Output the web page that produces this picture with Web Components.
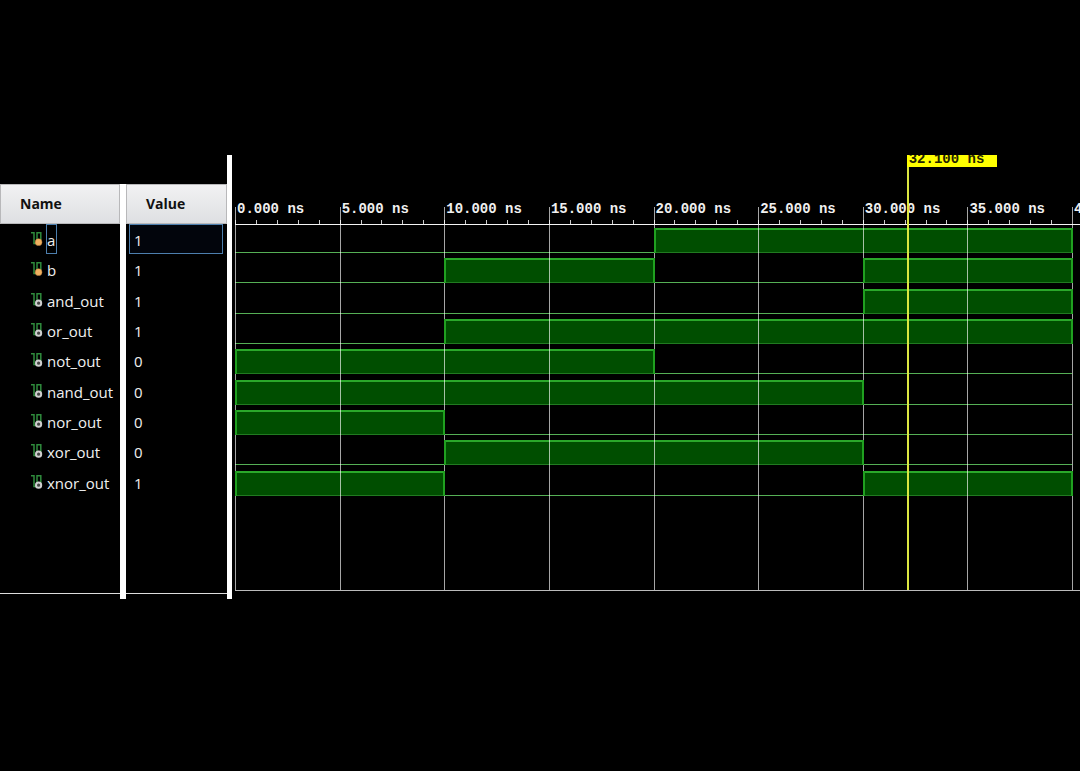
<!DOCTYPE html>
<html lang="en">
<head>
<meta charset="utf-8">
<title>Waveform</title>
<style>
body{
    margin: 0;
    min-height: 100vh;
    background-color: #000;
    color: #f0f0f0;
    font-family: "Open Sans", "Noto Sans", sans-serif;
}
</style>
</head>
<body>
<wave-viewer>
    <signal-table slot="signals"></signal-table>
    <wave-panel slot="waves"></wave-panel>
</wave-viewer>

<script>
const signals = [
    { name: 'a', value: '1', kind: 'in', wave: '0011' },
    { name: 'b', value: '1', kind: 'in', wave: '0101' },
    { name: 'and_out', value: '1', kind: 'out', wave: '0001' },
    { name: 'or_out', value: '1', kind: 'out', wave: '0111' },
    { name: 'not_out', value: '0', kind: 'out', wave: '1100' },
    { name: 'nand_out', value: '0', kind: 'out', wave: '1110' },
    { name: 'nor_out', value: '0', kind: 'out', wave: '1000' },
    { name: 'xor_out', value: '0', kind: 'out', wave: '0110' },
    { name: 'xnor_out', value: '1', kind: 'out', wave: '1001' }
];

class WaveViewer extends HTMLElement{
    constructor(){
        super();
        this.attachShadow({mode:'open'});
        this.shadowRoot.innerHTML = `
<style>
:host{
    display: block;
    padding-top: 155px;
    --rows-height: 273px;
}
.viewer{
    display: flex;
    align-items: flex-start;
}
.signals{
    flex: none;
    padding-top: 29px;
    border-right: 5px solid #fff;
}
.waves{
    flex: 1;
    min-width: 0;
    padding-left: 3px;
}
</style>
<main class="viewer">
    <section class="signals"><slot name="signals"></slot></section>
    <section class="waves"><slot name="waves"></slot></section>
</main>`;
    }
}

class SignalIcon extends HTMLElement{
    constructor(){
        super();
        this.attachShadow({mode:'open'});
    }

    connectedCallback(){
        const input = this.getAttribute('kind') === 'in';
        this.shadowRoot.innerHTML = `
<style>
:host{
    display: block;
    width: 12px;
    height: 14px;
}
svg{
    display: block;
}
</style>
<svg width="12" height="14" viewBox="0 0 12 14">
    <path d="M0 .8H3V11.5H6V.8H9.8V8" fill="none" stroke="#2f8a3c" stroke-width="1.5"/>
    <circle cx="7.6" cy="10.2" r="${input ? 3.4 : 2.6}" fill="${input ? '#f0b060' : '#444'}" stroke="${input ? '#c08440' : '#cfcfcf'}" stroke-width="${input ? 0.5 : 2}"/>
</svg>`;
    }
}

class SignalTable extends HTMLElement{
    constructor(){
        super();
        this.attachShadow({mode:'open'});
        const rows = signals.map((s, i) => `
<tr class="${i === 0 ? 'selected' : ''}">
    <td class="name"><signal-icon kind="${s.kind}"></signal-icon><span>${s.name}</span></td>
    <td class="value"><span>${s.value}</span></td>
</tr>`).join('');
        this.shadowRoot.innerHTML = `
<style>
:host{
    display: block;
    font-size: 15px;
    line-height: 20px;
}
table, thead, tfoot{
    display: block;
}
tr{
    display: flex;
}
th, td{
    box-sizing: border-box;
    display: flex;
    align-items: center;
    padding: 0;
}
th:first-child, td:first-child{
    width: 126px;
    border-right: 6px solid #fff;
}
th:last-child, td:last-child{
    width: 101px;
}
th{
    height: 40px;
    background: linear-gradient(#f2f2f3, #dedfe2);
    box-shadow: inset 0 0 0 1px #b8b8ba;
    color: #111;
    font-size: 14px;
    font-weight: bold;
    padding: 0 20px;
}
tbody{
    display: grid;
    grid-auto-rows: 1fr;
    height: var(--rows-height);
}
.name{
    padding-left: 31px;
    gap: 3px;
}
.name span, .value span{
    box-sizing: border-box;
    border: 1px solid transparent;
    height: 100%;
    padding: 5px 1px 0 0;
}
.value{
    padding: 0 4px 0 3px;
}
.value span{
    flex: 1;
    padding-left: 4px;
}
.selected span{
    border-color: #4d7fae;
}
.selected .value span{
    background-color: #02050c;
}
.filler td{
    height: 97px;
    box-shadow: inset 0 -1px #ddd;
}
.edge td{
    height: 5px;
}
</style>
<table>
    <thead><tr><th>Name</th><th>Value</th></tr></thead>
    <tbody>${rows}</tbody>
    <tfoot>
        <tr class="filler"><td></td><td></td></tr>
        <tr class="edge"><td></td><td></td></tr>
    </tfoot>
</table>`;
    }
}

class SignalWave extends HTMLElement{
    constructor(){
        super();
        this.attachShadow({mode:'open'});
    }

    connectedCallback(){
        //Equal neighbours are merged so that each run is one segment
        const runs = this.getAttribute('wave').match(/0+|1+/g);
        this.shadowRoot.innerHTML = `
<style>
:host{
    display: grid;
    grid-template-columns: repeat(4, 1fr);
    grid-template-rows: 25px;
    padding-top: 3px;
}
div{
    box-sizing: border-box;
    position: relative;
    border-bottom: 1px solid #55b055;
}
.high{
    background-color: #004e00;
    border-top: 2px solid #2aa82a;
    border-bottom-color: #217a21;
}
.high::after{
    content: "";
    position: absolute;
    z-index: 2;
    inset: -2px -1px -1px 0;
    border: solid #20a020;
    border-width: 0 2px;
}
</style>
${runs.map(r => `<div class="${r[0] === '1' ? 'high' : 'low'}" style="grid-column: span ${r.length}"></div>`).join('')}`;
    }
}

class TimeRuler extends HTMLElement{
    constructor(){
        super();
        this.attachShadow({mode:'open'});
        let marks = '';
        for(let t = 0; t <= 40; t += 5){
            marks += `<div class="mark"><span>${t}.000 ns</span><div class="ticks">${t < 40 ? '<i></i>'.repeat(5) : ''}</div></div>`;
        }
        this.shadowRoot.innerHTML = `
<style>
:host{
    display: grid;
    grid-template-columns: repeat(8, minmax(0, 1fr)) 8px;
    height: 24px;
    border-bottom: 1px solid #f4f4f4;
    font: bold 14px/18px "Liberation Mono", monospace;
    white-space: nowrap;
}
.mark{
    display: flex;
    flex-direction: column;
    justify-content: space-between;
}
span{
    padding-left: 2px;
}
.ticks{
    display: grid;
    grid-template-columns: repeat(5, 1fr);
    height: 4px;
}
i{
    border-left: 1px solid #ccc;
}
</style>
${marks}`;
    }
}

class TimeCursor extends HTMLElement{
    constructor(){
        super();
        this.attachShadow({mode:'open'});
        this.shadowRoot.innerHTML = `
<style>
:host{
    display: block;
    border-left: 2px solid #dbe640;
}
div{
    width: 88px;
    height: 12px;
    margin-left: -2px;
    padding-left: 2px;
    overflow: hidden;
    background-color: #ff0;
    color: #222200;
    font: bold 14px/8px "Liberation Mono", monospace;
    white-space: nowrap;
}
</style>
<div><slot></slot></div>`;
    }
}

class WavePanel extends HTMLElement{
    constructor(){
        super();
        this.attachShadow({mode:'open'});
        this.shadowRoot.innerHTML = `
<style>
:host{
    display: block;
    position: relative;
    overflow: hidden;
    padding-top: 45px;
}
.plot{
    height: 365px;
    border-bottom: 1px solid #bbb;
}
.rows{
    display: grid;
    grid-auto-rows: 1fr;
    height: var(--rows-height);
    margin-right: 8px;
}
.lines{
    position: absolute;
    z-index: 1;
    inset: 52px 0 1px 0;
    display: grid;
    grid-template-columns: repeat(8, 1fr) 8px;
}
.lines div{
    border-left: 1px solid rgba(255, 255, 255, .65);
}
time-cursor{
    position: absolute;
    z-index: 3;
    top: 0;
    bottom: 1px;
    left: calc((100% - 8px) * 32.1 / 40);
}
</style>
<time-ruler></time-ruler>
<div class="plot">
    <div class="rows">${signals.map(s => `<signal-wave wave="${s.wave}"></signal-wave>`).join('')}</div>
</div>
<div class="lines">${'<div></div>'.repeat(9)}</div>
<time-cursor>32.100 ns</time-cursor>`;
    }
}

customElements.define('signal-icon', SignalIcon);
customElements.define('signal-table', SignalTable);
customElements.define('signal-wave', SignalWave);
customElements.define('time-ruler', TimeRuler);
customElements.define('time-cursor', TimeCursor);
customElements.define('wave-panel', WavePanel);
customElements.define('wave-viewer', WaveViewer);
</script>
</body>
</html>
